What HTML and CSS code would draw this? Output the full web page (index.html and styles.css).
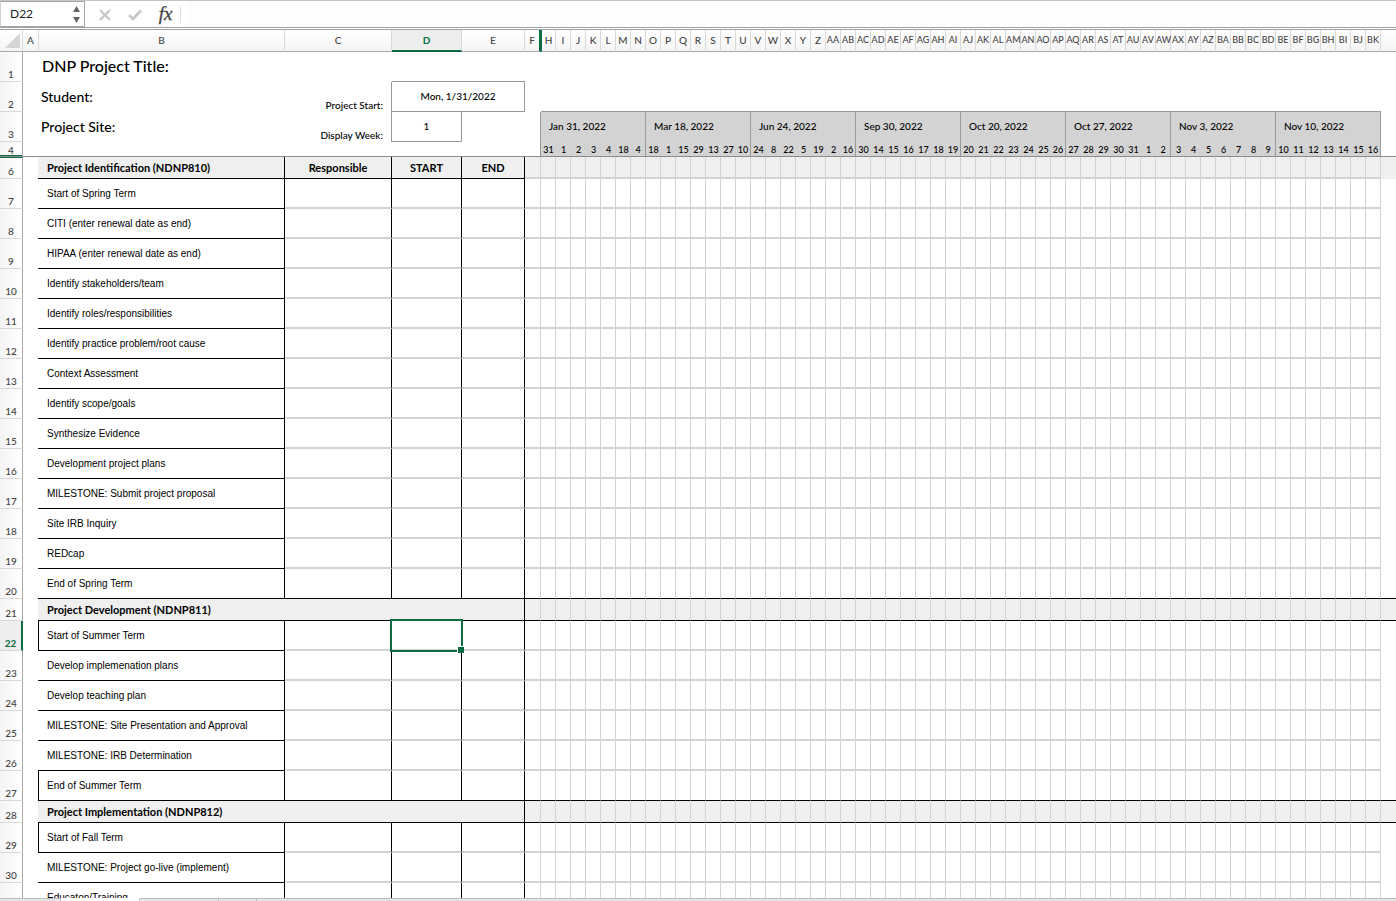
FILE: index.html
```html
<!DOCTYPE html>
<html lang="en">
<head>
<meta charset="utf-8">
<title>DNP Project Timeline</title>
<link rel="stylesheet" href="styles.css">
</head>
<body>
<header class="formula-bar">
  <div class="name-box">
    <input class="name-input" type="text" aria-label="Name box" value="D22">
    <div class="stepper">
      <button type="button" class="step" aria-label="Previous name"><svg width="7" height="6" viewBox="0 0 7 6"><path d="M3.5 0 7 6H0z" fill="#666"/></svg></button>
      <button type="button" class="step" aria-label="Next name"><svg width="7" height="6" viewBox="0 0 7 6"><path d="M0 0h7L3.5 6z" fill="#666"/></svg></button>
    </div>
  </div>
  <div class="formula-actions">
    <button type="button" class="action" aria-label="Cancel"><svg width="12" height="12" viewBox="0 0 12 12"><path d="M1 1 11 11M11 1 1 11" stroke="#c8c8c8" stroke-width="2.400" fill="none"/></svg></button>
    <button type="button" class="action" aria-label="Enter"><svg width="14" height="12" viewBox="0 0 14 12"><path d="M1 6 5 10 13 1.500" stroke="#c8c8c8" stroke-width="2.800" fill="none"/></svg></button>
    <button type="button" class="action fx" aria-label="Insert function">fx</button>
  </div>
  <input class="formula-input" type="text" aria-label="Formula">
</header>
<main class="sheet">
  <table class="grid">
    <colgroup id="cols"></colgroup>
    <thead><tr id="letters"></tr></thead>
    <tbody id="rows"></tbody>
  </table>
</main>
<footer class="tabs">
  <span class="tab-nav"></span><span class="tab tab-active"></span><span class="tab"></span><span class="tab-add"></span><span class="tab-rest"></span>
</footer>
<script src="app.js"></script>
</body>
</html>
```
FILE: styles.css
```css
* { box-sizing: border-box; }

body {
  margin: 0;
  height: 100vh;
  display: flex;
  flex-direction: column;
  overflow: hidden;
  background: #fff;
  color: #000;
  font-family: Lato, "Liberation Sans", sans-serif;
  font-size: 10px;
  font-weight: 500;
}

button, input { font-family: inherit; border: 0; padding: 0; background: none; }

/* Formula bar */
.formula-bar {
  flex: none;
  display: flex;
  height: 30px;
  border-top: 1px solid #c4c4c4;
  border-bottom: 3px double #a0a0a0;
}
.name-box {
  display: flex;
  width: 85px;
  border: 1px solid #a8a8a8;
  border-left-color: #d0d0d0;
}
.name-input { flex: 1; min-width: 0; padding: 0 0 2px 9px; font-size: 12px; color: #222; }
.stepper { display: flex; flex-direction: column; justify-content: space-between; width: 16px; padding: 4px 0 3px; }
.step { display: flex; justify-content: center; height: 6px; }
.formula-actions { display: flex; align-items: center; gap: 4px; padding-left: 7px; border-right: 1px solid #ddd; margin: 5px 0 4px; width: 96px; }
.action { display: flex; justify-content: center; align-items: center; width: 26px; }
.fx { font-family: "Liberation Serif", serif; font-style: italic; font-size: 19px; line-height: 18px; color: #444; -webkit-text-stroke: 0.3px #444; padding: 0 0 1px 1px; }
.formula-input { flex: 1; min-width: 0; margin-left: 7px; background: #fdfdfd; }

/* Sheet */
.sheet { flex: 1; min-height: 0; overflow: hidden; }
.grid { width: 100%; table-layout: fixed; border-collapse: separate; border-spacing: 0; }
.grid th, .grid td { padding: 0; font-weight: 500; white-space: nowrap; line-height: 12px; }

.w-head { width: 23px; }
.w-a { width: 15px; }
.w-b { width: 247px; }
.w-c { width: 107px; }
.w-d { width: 70px; }
.w-e { width: 63px; }
.w-f { width: 16px; }
.w-day { width: 15px; }

/* Column letters */
.letter, .corner {
  height: 22px;
  color: #444;
  background: linear-gradient(#fff, #f4f4f4);
  border-bottom: 1px solid #a8a8a8;
}
.grid .letter { border-right: 1px solid #d8d8d8; padding-bottom: 1px; }
.grid .letter.first { border-right: 0; }
.grid .letter.second { border-left: 1px solid #d8d8d8; }
.grid .letter.narrow { font-size: 9px; }
.grid .letter.plain { border-right: 0; }
.grid .letter.active { background: #eee; color: #0b6b41; border-bottom: 2px solid #0b6b41; font-weight: 700; padding: 0; }
.grid .letter.freeze { border-right: 2px solid #0b6b41; }
.grid .letter.after-freeze { border-left: 1px solid #0b6b41; }
.corner { border-right: 1px solid #d8d8d8; }
.corner svg { display: block; margin-left: 5px; }

/* Row numbers */
.grid .num {
  font-size: 10px;
  color: #444;
  vertical-align: bottom;
  text-align: center;
  padding-bottom: 1px;
  background: linear-gradient(90deg, #f4f4f4, #fff);
  border-right: 1px solid #a8a8a8;
  border-bottom: 1px solid #d8d8d8;
}
.grid .num.active { background: #eee; color: #0b6b41; font-weight: 700; border-right: 2px solid #0b6b41; }
.grid .num.frozen { padding: 0; border-bottom: 1px solid #8c8c8c; box-shadow: inset 0 -1px #0b6b41; }
.grid .num.after-frozen { border-top: 1px solid #0b6b41; }

.h30 { height: 30px; }
.h22 { height: 22px; }
.h15 { height: 15px; }

/* Title block */
.grid .title { padding-left: 3px; font-size: 14px; line-height: 18px; text-align: left; }
.grid .title-main { padding: 0 0 2px 4px; font-size: 16px; }
.grid .caption { padding: 0 8px 1px 0; text-align: right; vertical-align: bottom; }
.boxed-right { border-right: 1px solid #999; }
.boxed-bottom { border-bottom: 1px solid #999; }
.grid .value { padding-bottom: 1px; text-align: center; border-right: 1px solid #999; border-bottom: 1px solid #999; }
.grid .week { padding: 0 0 2px 8px; text-align: left; background: #d3d3d3; border-right: 1px solid #999; }
.grid .day { padding-top: 1px; font-size: 9px; line-height: 11px; text-align: center; background: #d3d3d3; }
.day.week-end { border-right: 1px solid #999; }
.row-frozen td { border-bottom: 1px solid #8c8c8c; }

/* Task rows */
.band td, .band th { background-color: #efefef; }
.grid .heading { font-weight: 700; font-size: 11px; border-right: 1px solid #000; border-bottom: 1px solid #000; }
.grid .name { padding-left: 9px; text-align: left; }
.grid .task { font-family: "Liberation Sans", Arial, sans-serif; font-weight: 400; border-right: 1px solid #000; border-bottom: 1px solid #000; }
.grid .task.edge { padding-left: 8px; border-left: 1px solid #000; }
.grid .gutter { background: #fff; }
.entry { border-right: 1px solid #000; border-bottom: 2px solid #d3d3d3; }
.slot { border-right: 1px solid #d3d3d3; border-bottom: 2px solid #d3d3d3; }
.closed .entry, .closed .slot, .closed .rest { border-bottom: 1px solid #000; }

/* Selected cell */
.selected { position: relative; }
.selected::before {
  content: "";
  position: absolute;
  inset: -2px -2px -3px;
  border: 2px solid #0b6b41;
}
.selected::after {
  content: "";
  position: absolute;
  right: -3px;
  bottom: -4px;
  width: 6px;
  height: 6px;
  background: #0b6b41;
  border: 1px solid #fff;
  border-right: 0;
  border-bottom: 0;
}

/* Sheet tabs */
.tabs { flex: none; display: flex; height: 3px; }
.tabs span { background: #e6e6e6; border-top: 1px solid #bbb; border-right: 1px solid #bbb; }
.tab-nav { width: 61px; }
.tab { width: 79px; }
.tabs .tab-active { background: #fff; border-top-color: #fff; }
.tab-add { width: 38px; }
.tabs .tab-rest { flex: 1; border-right: 0; }
```
FILE: app.js
```js
const DAY_COUNT = 56;
const weeks = ["Jan 31, 2022", "Mar 18, 2022", "Jun 24, 2022", "Sep 30, 2022", "Oct 20, 2022", "Oct 27, 2022", "Nov 3, 2022", "Nov 10, 2022"];
const days = [31,1,2,3,4,18,4, 18,1,15,29,13,27,10, 24,8,22,5,19,2,16, 30,14,15,16,17,18,19, 20,21,22,23,24,25,26, 27,28,29,30,31,1,2, 3,4,5,6,7,8,9, 10,11,12,13,14,15,16];

const spring = ["Start of Spring Term", "CITI (enter renewal date as end)", "HIPAA (enter renewal date as end)", "Identify stakeholders/team", "Identify roles/responsibilities", "Identify practice problem/root cause", "Context Assessment", "Identify scope/goals", "Synthesize Evidence", "Development project plans", "MILESTONE: Submit project proposal", "Site IRB Inquiry", "REDcap", "End of Spring Term"];
const summer = ["Start of Summer Term", "Develop implemenation plans", "Develop teaching plan", "MILESTONE: Site Presentation and Approval", "MILESTONE: IRB Determination", "End of Summer Term"];
const fall = ["Start of Fall Term", "MILESTONE: Project go-live (implement)", "Educaton/Training"];

const columnName = i => i < 26 ? String.fromCharCode(65 + i) : columnName(Math.floor(i / 26) - 1) + columnName(i % 26);
const repeat = (n, fn) => Array.from({ length: n }, (_, i) => fn(i)).join("");

document.getElementById("cols").innerHTML =
  ["head", "a", "b", "c", "d", "e", "f"].map(c => `<col class="w-${c}">`).join("") +
  repeat(DAY_COUNT, () => '<col class="w-day">') + "<col>";

const letterClass = { A: "first", B: "second", D: "active", F: "freeze", H: "after-freeze" };
const letter = name => `<th scope="col" class="letter ${name.length > 1 ? "narrow" : letterClass[name] || ""}">${name}</th>`;
document.getElementById("letters").innerHTML =
  '<td class="corner"><svg width="15" height="15" viewBox="0 0 15 15"><path d="M15 0v15H0z" fill="#d4d4d4"/></svg></td>' +
  ["A", "B", "C", "D", "E", "F"].map(letter).join("") +
  repeat(DAY_COUNT, i => letter(columnName(i + 7))) + '<td class="letter plain"></td>';

const num = (n, size, extra = "") => `<th scope="row" class="num ${size} ${extra}">${n}</th>`;
const slots = () => repeat(DAY_COUNT + 1, () => '<td class="slot"></td>') + '<td class="rest"></td>';

let html = "";
html += `<tr>${num(1, "h30")}<td></td><td class="title title-main">DNP Project Title:</td><td></td><td class="boxed-bottom" colspan="2"></td><td colspan="58"></td></tr>`;
html += `<tr>${num(2, "h30")}<td></td><td class="title">Student:</td><td class="caption boxed-right">Project Start:</td><td class="value" colspan="2">Mon, 1/31/2022</td><td></td><td class="boxed-bottom" colspan="56"></td><td></td></tr>`;
html += `<tr>${num(3, "h30")}<td></td><td class="title">Project Site:</td><td class="caption boxed-right">Display Week:</td><td class="value">1</td><td></td><td class="boxed-right"></td>${weeks.map(w => `<td class="week" colspan="7">${w}</td>`).join("")}<td></td></tr>`;
html += `<tr class="row-frozen">${num(4, "h15", "frozen")}<td></td><td></td><td></td><td></td><td></td><td class="boxed-right"></td>${days.map((d, i) => `<td class="day ${i % 7 === 6 ? "week-end" : ""}">${d}</td>`).join("")}<td></td></tr>`;
html += `<tr class="band">${num(6, "h22", "after-frozen")}<td class="gutter"></td><th class="heading name">Project Identification (NDNP810)</th><th class="heading">Responsible</th><th class="heading">START</th><th class="heading">END</th>${slots()}</tr>`;

let rowNumber = 7;
function addTasks(tasks, closeLast) {
  tasks.forEach((task, i) => {
    const last = closeLast && i === tasks.length - 1;
    const edge = rowNumber === 22 || rowNumber === 27 || rowNumber === 29;
    const active = rowNumber === 22;
    html += `<tr class="${last ? "closed" : ""}">${num(rowNumber, "h30", active ? "active" : "")}<td class="gutter"></td><td class="task name ${edge ? "edge" : ""}">${task}</td><td class="entry"></td><td class="entry ${active ? "selected" : ""}"></td><td class="entry"></td>${slots()}</tr>`;
    rowNumber++;
  });
}
function addBand(title) {
  html += `<tr class="band closed">${num(rowNumber, "h22")}<td class="gutter"></td><th class="heading name" colspan="4">${title}</th>${slots()}</tr>`;
  rowNumber++;
}

addTasks(spring, true);
addBand("Project Development (NDNP811)");
addTasks(summer, true);
addBand("Project Implementation (NDNP812)");
addTasks(fall, false);
document.getElementById("rows").innerHTML = html;
```
